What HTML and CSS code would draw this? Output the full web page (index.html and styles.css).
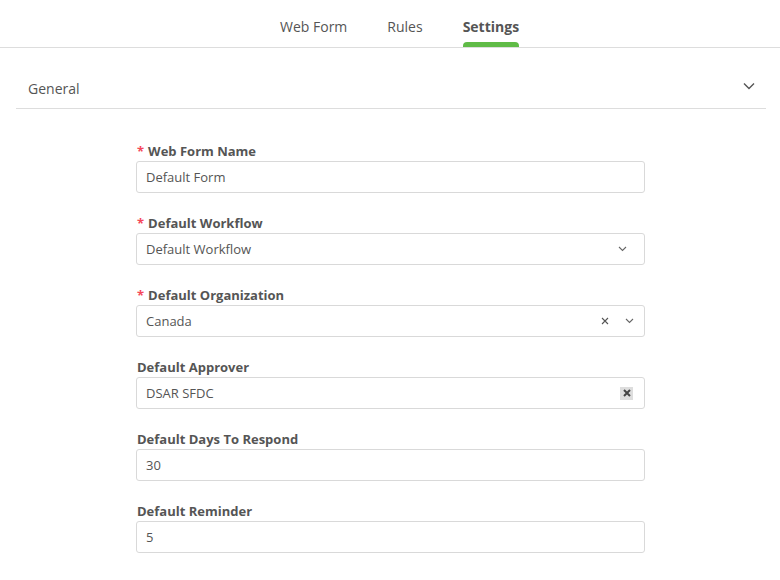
FILE: index.html
```html
<!DOCTYPE html>
<html>
<head>
<meta charset="utf-8">
<link rel="stylesheet" href="styles.css">
</head>
<body>
<div class="tabs">
  <div class="tab-list">
    <div class="tab">Web Form</div>
    <div class="tab">Rules</div>
    <div class="tab active">Settings</div>
  </div>
</div>
<div class="section">
  <div class="section-head">
    <span>General</span>
    <svg class="chev" width="12" height="8" viewBox="0 0 12 8"><path d="M1 1.5 L6 6.5 L11 1.5" fill="none" stroke="#555" stroke-width="1.4"/></svg>
  </div>
</div>
<div class="form">
  <div class="field">
    <div class="label"><span class="req">*</span>Web Form Name</div>
    <div class="input">Default Form</div>
  </div>
  <div class="field">
    <div class="label"><span class="req">*</span>Default Workflow</div>
    <div class="input"><span class="val">Default Workflow</span>
      <svg class="sel-chev wf" width="9" height="6" viewBox="0 0 9 6"><path d="M1 1 L4.5 4.5 L8 1" fill="none" stroke="#666" stroke-width="1.1"/></svg>
    </div>
  </div>
  <div class="field">
    <div class="label"><span class="req">*</span>Default Organization</div>
    <div class="input"><span class="val">Canada</span>
      <svg class="clear" width="8" height="8" viewBox="0 0 8 8"><path d="M1 1 L7 7 M7 1 L1 7" stroke="#555" stroke-width="1.1"/></svg>
      <svg class="sel-chev" width="9" height="6" viewBox="0 0 9 6"><path d="M1 1 L4.5 4.5 L8 1" fill="none" stroke="#666" stroke-width="1.1"/></svg>
    </div>
  </div>
  <div class="field">
    <div class="label">Default Approver</div>
    <div class="input"><span class="val">DSAR SFDC</span>
      <span class="xbox"><svg width="8" height="8" viewBox="0 0 8 8"><path d="M1 1 L7 7 M7 1 L1 7" stroke="#444" stroke-width="2"/></svg></span>
    </div>
  </div>
  <div class="field">
    <div class="label">Default Days To Respond</div>
    <div class="input">30</div>
  </div>
  <div class="field">
    <div class="label">Default Reminder</div>
    <div class="input">5</div>
  </div>
</div>
</body>
</html>
```
FILE: styles.css
```css
* { box-sizing: border-box; }
body {
  margin: 0;
  background: #fff;
  font-family: "Open Sans", "Liberation Sans", sans-serif;
  color: #555;
}
.tabs {
  height: 48px;
  border-bottom: 1px solid #ddd;
  display: flex;
  padding-left: 280px;
}
.tab-list { display: flex; gap: 40px; }
.tab {
  font-size: 14px;
  color: #555;
  padding-top: 17px;
  position: relative;
  height: 47px;
}
.tab.active { font-weight: 700; }
.tab.active::after {
  content: "";
  position: absolute;
  left: 0; right: 0; bottom: 0;
  height: 5px;
  background: #5fbb46;
  border-radius: 4px 4px 0 0;
}
.section {
  margin: 0 14px 0 16px;
}
.section-head {
  height: 61px;
  border-bottom: 1px solid #ddd;
  display: flex;
  align-items: center;
  justify-content: space-between;
  padding: 20px 11px 0 12px;
  font-size: 14px;
  color: #555;
}
.chev { margin-top: -4px; margin-right: 0; }
.form {
  margin-left: 136px;
  width: 509px;
  padding-top: 33px;
  display: flex;
  flex-direction: column;
  gap: 21px;
}
.field { display: flex; flex-direction: column; gap: 1px; }
.label {
  font-size: 13px;
  font-weight: 700;
  color: #555;
  line-height: 18px;
  padding-left: 1px;
}
.req { color: #f5485a; margin-right: 4px; }
.input {
  height: 32px;
  border: 1px solid #d9d9d9;
  border-radius: 3px;
  font-size: 13px;
  color: #555;
  padding: 0 10px 0 9px;
  display: flex;
  align-items: center;
}
.val { flex: 1; }
.sel-chev { margin-right: 0; }
.sel-chev.wf { margin-right: 7px; }
.clear { margin-right: 16px; }
.xbox {
  width: 13px; height: 13px;
  background: #ddd;
  display: flex; align-items: center; justify-content: center;
  margin-right: 1px;
}
```
